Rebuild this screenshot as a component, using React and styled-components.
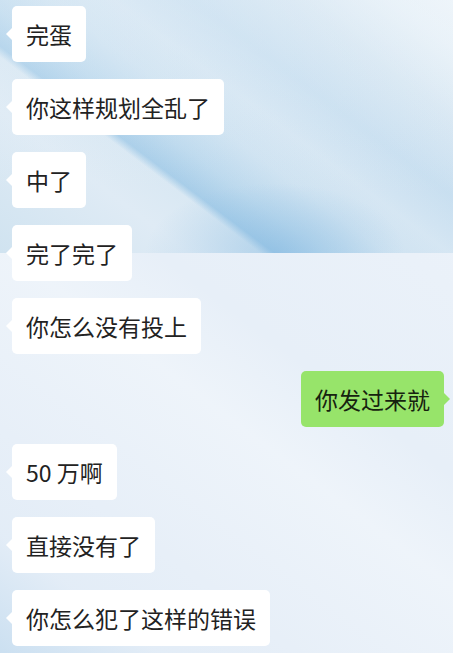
import React from 'react';
import styled, { createGlobalStyle } from 'styled-components';

const GlobalStyle = createGlobalStyle`
html, body {
    margin: 0;
    padding: 0;
    width: 453px;
    height: 653px;
    overflow: hidden;
}
body {
    font-family: "Noto Sans CJK SC", "Noto Sans", sans-serif;
}
`;

// chat wallpaper: the upper 253px is one wave picture, the rest a paler one
const Screen = styled.div`
width: 453px;
height: 653px;
overflow: hidden;
box-sizing: border-box;
background-color: #e7eff8;
background-image:
    linear-gradient(to bottom, rgba(230, 240, 248, 0.35) 0%, rgba(230, 240, 248, 0) 78%),
    radial-gradient(ellipse 130px 70px at 275px 253px, rgba(120, 178, 222, 0.4), rgba(120, 178, 222, 0)),
    linear-gradient(37deg,
        rgba(0,0,0,0) 33%,
        rgba(150, 196, 229, 0.75) 34.8%,
        rgba(165, 205, 233, 0.55) 41%,
        rgba(190, 218, 238, 0.32) 49%,
        rgba(0,0,0,0) 57%,
        rgba(180, 212, 236, 0.4) 67%,
        rgba(0,0,0,0) 80%,
        rgba(238, 245, 250, 0.85) 92%,
        rgba(242, 247, 251, 1) 100%),
    linear-gradient(37deg, #d0e3f0 0%, #dfebf5 24%, #d9e8f3 34%, #d5e6f3 60%, #dbe9f3 100%),
    linear-gradient(37deg,
        rgba(200, 222, 240, 0.9) 0%,
        rgba(224, 235, 246, 0.6) 16%,
        rgba(0,0,0,0) 30%,
        rgba(241, 246, 251, 0.7) 55%,
        rgba(0,0,0,0) 70%,
        rgba(237, 243, 250, 0.6) 100%);
background-size: 453px 253px, 453px 253px, 453px 253px, 453px 253px, 453px 400px;
background-position: 0 0, 0 0, 0 0, 0 0, 0 253px;
background-repeat: no-repeat;
`;

const Thread = styled.div`
display: flex;
flex-direction: column;
gap: 17px;
padding: 6px 9px 0 12px;
`;

const Bubble = styled.div`
position: relative;
align-self: ${props => props.$mine ? 'flex-end' : 'flex-start'};
box-sizing: border-box;
padding: 14px 14px;
font-size: 23px;
line-height: 28px;
color: ${props => props.$mine ? '#16220f' : '#222222'};
background: ${props => props.$mine ? '#97e46a' : '#ffffff'};
border-radius: 5px;
white-space: nowrap;
&::before {
    content: "";
    position: absolute;
    top: 50%;
    margin-top: -6px;
    ${props => props.$mine ? 'right: -6px;' : 'left: -6px;'}
    border-top: 6px solid transparent;
    border-bottom: 6px solid transparent;
    ${props => props.$mine
        ? 'border-left: 6px solid #97e46a;'
        : 'border-right: 6px solid #ffffff;'}
}
`;

const messages = [
    { text: '完蛋' },
    { text: '你这样规划全乱了' },
    { text: '中了' },
    { text: '完了完了' },
    { text: '你怎么没有投上' },
    { text: '你发过来就', mine: true },
    { text: '50 万啊' },
    { text: '直接没有了' },
    { text: '你怎么犯了这样的错误' },
];

export default function App() {
    return (
        <>
            <GlobalStyle />
            <Screen>
                <Thread>
                    {messages.map((m, i) => (
                        <Bubble key={i} $mine={m.mine}>{m.text}</Bubble>
                    ))}
                </Thread>
            </Screen>
        </>
    );
}
